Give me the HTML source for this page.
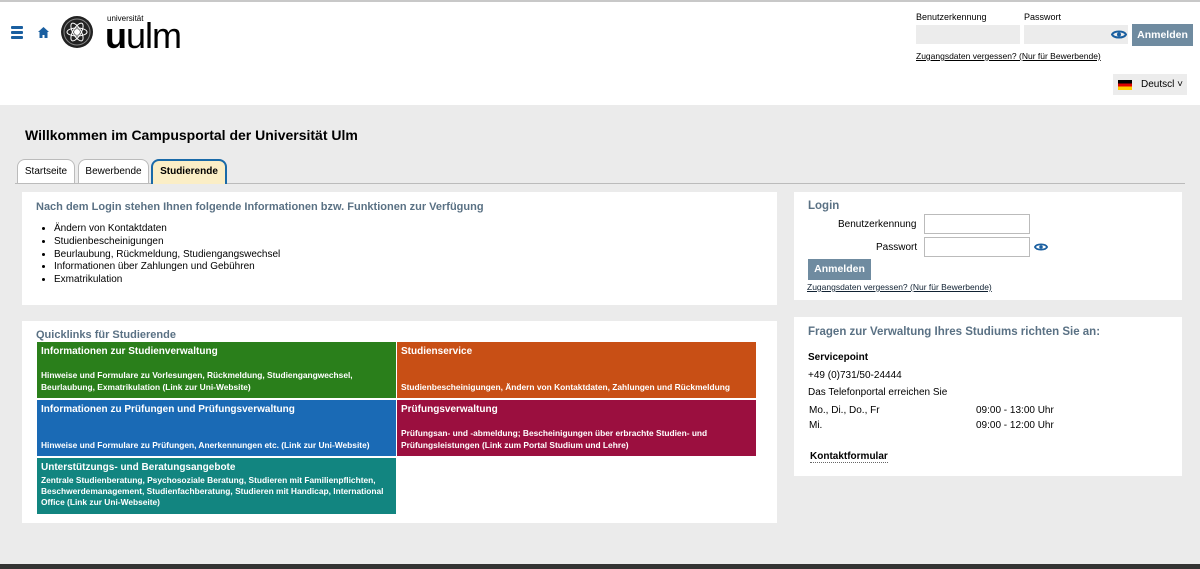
<!DOCTYPE html>
<html><head><meta charset="utf-8"><style>
*{box-sizing:border-box;margin:0;padding:0}
body{width:1200px;height:569px;overflow:hidden;background:#ebebeb;font-family:"Liberation Sans",Arial,sans-serif;color:#000;position:relative}
.a{position:absolute}
.hdr{left:0;top:0;width:1200px;height:105px;background:#fff;border-top:2px solid #c8c8c8}
.panel{background:#fff;position:absolute}
.h{color:#5a7184;font-weight:bold}
.tile{position:absolute;color:#fff;font-weight:bold;font-size:8.4px;line-height:12px;padding:3px 4px}
.tile b{display:block;font-size:10px;line-height:13px}
.tab{position:absolute;top:159px;height:24px;border:1px solid #bbb;border-bottom:none;border-radius:8px 8px 0 0;background:#fff;font-size:10px;padding:6px 0 0;text-align:center}
</style></head><body>
<div class="a hdr"></div>
<div class="a" style="left:11px;top:26px;width:12px">
<div style="height:3px;background:#1a5fa0;margin-bottom:2px;border-radius:1px"></div><div style="height:3px;background:#1a5fa0;margin-bottom:2px;border-radius:1px"></div><div style="height:3px;background:#1a5fa0;border-radius:1px"></div></div>
<svg class="a" style="left:38px;top:27px" width="11" height="11" viewBox="0 0 11 11"><path d="M5.5 0L0 5h1.5v6h3V8h2v3h3V5H11z" fill="#1a5fa0"/></svg>
<svg class="a" style="left:60px;top:15px" width="34" height="34" viewBox="0 0 34 34"><circle cx="17" cy="17" r="16" fill="#222"/><circle cx="17" cy="17" r="13" fill="none" stroke="#888" stroke-width="1"/><ellipse cx="17" cy="17" rx="10" ry="4" fill="none" stroke="#fff" stroke-width="1"/><ellipse cx="17" cy="17" rx="10" ry="4" fill="none" stroke="#fff" stroke-width="1" transform="rotate(60 17 17)"/><ellipse cx="17" cy="17" rx="10" ry="4" fill="none" stroke="#fff" stroke-width="1" transform="rotate(-60 17 17)"/><circle cx="17" cy="17" r="3" fill="#fff"/></svg>
<div class="a" style="left:107px;top:14px;font-size:8px">universität</div>
<div class="a" style="left:105px;top:16px;font-size:36px;line-height:40px;letter-spacing:-1px"><b>u</b>ulm</div>
<div class="a" style="left:916px;top:12px;font-size:9px">Benutzerkennung</div>
<div class="a" style="left:1024px;top:12px;font-size:9px">Passwort</div>
<div class="a" style="left:916px;top:25px;width:104px;height:19px;background:#ececec"></div>
<div class="a" style="left:1024px;top:25px;width:104px;height:19px;background:#ececec"></div>
<svg class="a" style="left:1111px;top:29px" width="16" height="11" viewBox="0 0 16 11"><path d="M1 5.5C3 1.5 13 1.5 15 5.5C13 9.5 3 9.5 1 5.5Z" fill="none" stroke="#1a5fa0" stroke-width="2"/><circle cx="8" cy="5.5" r="2" fill="#1a5fa0"/></svg>
<div class="a" style="left:1132px;top:24px;width:61px;height:22px;background:#6f8ba0;color:#fff;font-weight:bold;font-size:10.5px;text-align:center;line-height:22px">Anmelden</div>
<div class="a" style="left:916px;top:51px;font-size:8.5px;text-decoration:underline">Zugangsdaten vergessen? (Nur für Bewerbende)</div>
<div class="a" style="left:1113px;top:74px;width:74px;height:21px;background:#ececec;font-size:10px;line-height:21px;padding-left:28px">Deutscl ˅</div>
<div class="a" style="left:1118px;top:80px;width:14px;height:10px;background:linear-gradient(#000 33%,#d00 33% 66%,#fc0 66%)"></div>
<div class="a" style="left:25px;top:127px;font-size:14px;font-weight:bold">Willkommen im Campusportal der Universität Ulm</div>
<div class="a" style="left:15px;top:183px;width:1170px;height:1px;background:#bbb"></div>
<div class="tab" style="left:17px;width:58px">Startseite</div>
<div class="tab" style="left:78px;width:71px">Bewerbende</div>
<div class="tab" style="left:151px;width:76px;background:#fbeec6;border:2px solid #1a6aa8;border-bottom:none;font-weight:bold;padding-top:5px;height:25px">Studierende</div>
<div class="panel" style="left:22px;top:192px;width:755px;height:113px">
<div class="h" style="position:absolute;left:14px;top:9px;font-size:11px">Nach dem Login stehen Ihnen folgende Informationen bzw. Funktionen zur Verfügung</div>
<ul style="position:absolute;left:32px;top:31px;font-size:10px;line-height:12.8px">
<li>Ändern von Kontaktdaten</li><li>Studienbescheinigungen</li><li>Beurlaubung, Rückmeldung, Studiengangswechsel</li><li>Informationen über Zahlungen und Gebühren</li><li>Exmatrikulation</li></ul></div>
<div class="panel" style="left:22px;top:321px;width:755px;height:202px">
<div class="h" style="position:absolute;left:14px;top:8px;font-size:11px">Quicklinks für Studierende</div></div>
<div class="tile" style="left:37px;top:342px;width:359px;height:56px;background:#2a7f1b"><b>Informationen zur Studienverwaltung</b><div style="margin-top:11px">Hinweise und Formulare zu Vorlesungen, Rückmeldung, Studiengangwechsel, Beurlaubung, Exmatrikulation (Link zur Uni-Website)</div></div>
<div class="tile" style="left:397px;top:342px;width:359px;height:56px;background:#c84f15"><b>Studienservice</b><div style="margin-top:23px">Studienbescheinigungen, Ändern von Kontaktdaten, Zahlungen und Rückmeldung</div></div>
<div class="tile" style="left:37px;top:400px;width:359px;height:56px;background:#1a6ab5"><b>Informationen zu Prüfungen und Prüfungsverwaltung</b><div style="margin-top:23px">Hinweise und Formulare zu Prüfungen, Anerkennungen etc. (Link zur Uni-Website)</div></div>
<div class="tile" style="left:397px;top:400px;width:359px;height:56px;background:#9b0f3f"><b>Prüfungsverwaltung</b><div style="margin-top:11px">Prüfungsan- und -abmeldung; Bescheinigungen über erbrachte Studien- und Prüfungsleistungen (Link zum Portal Studium und Lehre)</div></div>
<div class="tile" style="left:37px;top:458px;width:359px;height:56px;background:#128580"><b>Unterstützungs- und Beratungsangebote</b><div style="margin-top:1px;line-height:11px">Zentrale Studienberatung, Psychosoziale Beratung, Studieren mit Familienpflichten, Beschwerdemanagement, Studienfachberatung, Studieren mit Handicap, International Office (Link zur Uni-Webseite)</div></div>
<div class="panel" style="left:794px;top:192px;width:388px;height:108px;font-size:10px">
<div class="h" style="position:absolute;left:14px;top:8px;font-size:11.5px">Login</div>
<div style="position:absolute;left:44px;top:27px">Benutzerkennung</div>
<div style="position:absolute;left:82px;top:50px">Passwort</div>
<div style="position:absolute;left:130px;top:22px;width:106px;height:20px;border:1px solid #bbb"></div>
<div style="position:absolute;left:130px;top:45px;width:106px;height:20px;border:1px solid #bbb"></div>
<svg style="position:absolute;left:240px;top:50px" width="14" height="10" viewBox="0 0 16 11"><path d="M1 5.5C3 1.5 13 1.5 15 5.5C13 9.5 3 9.5 1 5.5Z" fill="none" stroke="#1a5fa0" stroke-width="2"/><circle cx="8" cy="5.5" r="2" fill="#1a5fa0"/></svg>
<div style="position:absolute;left:14px;top:67px;width:63px;height:21px;background:#6f8ba0;color:#fff;font-weight:bold;font-size:10.5px;text-align:center;line-height:21px">Anmelden</div>
<div style="position:absolute;left:13px;top:90px;font-size:8.5px;color:#123;text-decoration:underline">Zugangsdaten vergessen? (Nur für Bewerbende)</div></div>
<div class="panel" style="left:794px;top:317px;width:388px;height:159px;font-size:10px">
<div class="h" style="position:absolute;left:14px;top:9px;font-size:11.5px">Fragen zur Verwaltung Ihres Studiums richten Sie an:</div>
<div style="position:absolute;left:14px;top:35px;font-weight:bold">Servicepoint</div>
<div style="position:absolute;left:14px;top:53px">+49 (0)731/50-24444</div>
<div style="position:absolute;left:14px;top:70px">Das Telefonportal erreichen Sie</div>
<div style="position:absolute;left:15px;top:88px">Mo., Di., Do., Fr</div><div style="position:absolute;left:182px;top:88px">09:00 - 13:00 Uhr</div>
<div style="position:absolute;left:15px;top:103px">Mi.</div><div style="position:absolute;left:182px;top:103px">09:00 - 12:00 Uhr</div>
<div style="position:absolute;left:16px;top:134px;font-weight:bold;border-bottom:1px dotted #666">Kontaktformular</div></div>
<div class="a" style="left:0;top:564px;width:1200px;height:5px;background:#333"></div>
</body></html>
